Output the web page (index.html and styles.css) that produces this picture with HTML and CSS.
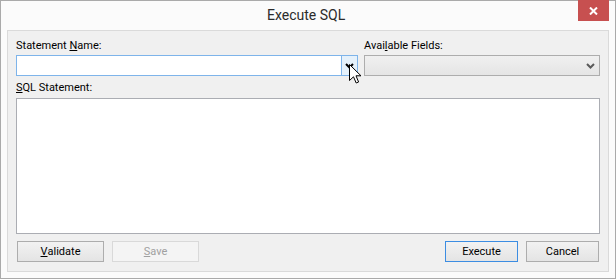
FILE: index.html
```html
<!DOCTYPE html>
<html>
<head>
<meta charset="utf-8">
<link rel="stylesheet" href="styles.css">
</head>
<body>
<div class="window">
  <div class="titlebar">
    <div class="title">Execute SQL</div>
    <div class="close"><svg width="9" height="8" viewBox="0 0 9 8"><path d="M1 0.5 L8 7.5 M8 0.5 L1 7.5" stroke="#fff" stroke-width="2" fill="none"/></svg></div>
  </div>
  <div class="panel">
    <div class="top">
      <div class="field">
        <div class="label">Statement <u>N</u>ame:</div>
        <div class="combo active">
          <div class="combo-edit"></div>
          <div class="combo-btn"><svg width="9" height="6" viewBox="0 0 9 6"><path d="M1 1 L4.5 4.5 L8 1" stroke="#000" stroke-width="2" fill="none"/></svg></div>
          <svg class="cursor" width="13" height="20" viewBox="0 0 13 20"><path d="M0.5 0.5 L0.5 16.5 L4.5 12.8 L7.2 19 L9.6 18 L7 11.8 L12 11.8 Z" fill="#fff" stroke="#000" stroke-width="1"/></svg>
        </div>
      </div>
      <div class="field">
        <div class="label">Avai<u>l</u>able Fields:</div>
        <div class="combo disabled">
          <div class="combo-fill"></div>
          <div class="chev"><svg width="9" height="6" viewBox="0 0 9 6"><path d="M1 1 L4.5 4.5 L8 1" stroke="#5a5a5a" stroke-width="2" fill="none"/></svg></div>
        </div>
      </div>
    </div>
    <div class="label sql-label"><u>S</u>QL Statement:</div>
    <div class="textarea"></div>
    <div class="buttons">
      <div class="group">
        <div class="btn wide"><u>V</u>alidate</div>
        <div class="btn wide off"><u>S</u>ave</div>
      </div>
      <div class="group">
        <div class="btn focus">Execute</div>
        <div class="btn">Cancel</div>
      </div>
    </div>
  </div>
</div>
</body>
</html>
```
FILE: styles.css
```css
* { box-sizing: border-box; }
html, body { margin: 0; padding: 0; }
body { width: 616px; height: 279px; overflow: hidden; font-family: Roboto, "Liberation Sans", sans-serif; font-size: 11px; color: #000; }
u { text-decoration: underline; text-underline-offset: 1px; }
.window {
  width: 616px; height: 279px;
  border: 1px solid #aaaaaa;
  background: #fbfbfb;
  display: flex; flex-direction: column;
}
.titlebar {
  height: 29px;
  display: flex; align-items: flex-start; justify-content: space-between;
}
.title {
  font-size: 14px; color: #2b2b2b;
  padding-left: 266px; padding-top: 6px; line-height: 16px;
}
.close {
  width: 31px; height: 21px; margin: -1px 6px 0 0;
  background: #c75050;
  display: flex; align-items: center; justify-content: center;
}
.panel {
  flex: 1;
  margin: 0 6px 6px 6px;
  border: 1px solid #dadada;
  background: #f0f0f0;
  padding: 7px 8px 0 8px;
  display: flex; flex-direction: column;
}
.top { display: grid; grid-template-columns: 342px 236px; column-gap: 6px; }
.label { line-height: 16px; height: 17px; }
.combo { height: 21px; display: flex; position: relative; }
.combo.active { border: 1px solid #7eb4ea; background: #fff; }
.combo-edit { flex: 1; }
.combo-btn {
  width: 17px; margin: -1px -1px -1px 0;
  border: 1px solid #7eb4ea; background: #e5f1fb;
  display: flex; align-items: center; justify-content: center; padding-top: 1px;
}
.cursor { position: absolute; left: 332px; top: 8px; }
.combo.disabled { border: 1px solid #adadad; background: linear-gradient(#f0f0f0, #e5e5e5); }
.combo-fill { flex: 1; }
.chev { width: 17px; display: flex; align-items: center; justify-content: center; padding-top: 1px; }
.sql-label { margin-top: 4px; height: 16px; }
.textarea { height: 136px; margin-top: 2px; border: 1px solid #abadb3; background: #fff; }
.buttons { display: flex; justify-content: space-between; margin-top: 7px; padding: 0 1px; }
.group { display: flex; gap: 8px; }
.btn {
  width: 73px; height: 21px;
  border: 1px solid #adadad;
  background: linear-gradient(#f2f2f2, #e4e4e4);
  display: flex; align-items: center; justify-content: center;
  line-height: 16px;
}
.btn.wide { width: 87px; }
.btn.off { border-color: #d9d9d9; background: #f4f4f4; color: #a0a0a0; }
.btn.focus { border-color: #3c8de2; }
```
